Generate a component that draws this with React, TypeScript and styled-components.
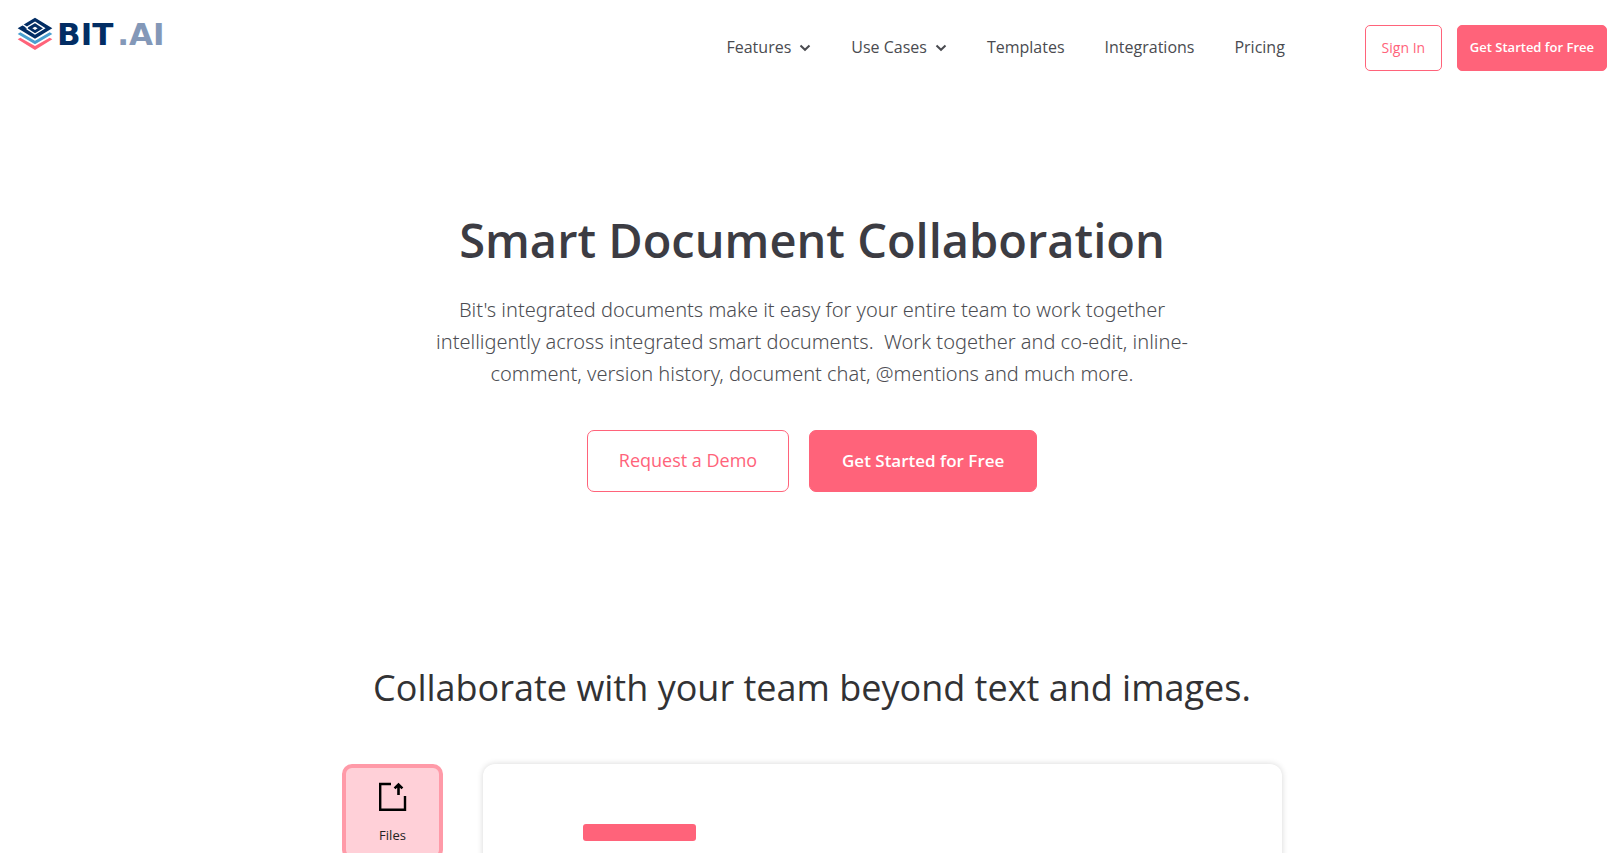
import React from 'react';
import styled, { createGlobalStyle } from 'styled-components';

const coral = '#ff637a';

const GlobalStyle = createGlobalStyle`
  *, *::before, *::after { box-sizing: border-box; }
  html { scrollbar-width: none; }
  body {
    margin: 0;
    background: #fff;
    color: #323234;
    font-family: 'Open Sans', 'Noto Sans', sans-serif;
  }
  h1, h2, p, ul { margin: 0; padding: 0; }
`;

const Header = styled.header`
  display: flex;
  align-items: flex-start;
  justify-content: space-between;
  padding: 0 17px;
`;

const LogoLink = styled.a`
  display: flex;
  align-items: center;
  gap: 4px;
  margin-top: 17px;
  text-decoration: none;
`;

const Wordmark = styled.span`
  display: flex;
  gap: 4px;
  font: 700 31px/32px 'DejaVu Sans', sans-serif;
  color: #022d64;
`;

const WordmarkSuffix = styled.span`
  color: #8398b8;
`;

const Menu = styled.nav`
  display: flex;
  align-items: center;
  gap: 80px;
  margin-top: 25px;
`;

const MenuList = styled.ul`
  display: flex;
  gap: 40px;
  padding-bottom: 2px;
  list-style: none;
`;

const MenuLink = styled.a`
  display: flex;
  align-items: center;
  gap: 8px;
  color: #4a4b50;
  font-size: 16px;
  line-height: 24px;
  text-decoration: none;
`;

const Actions = styled.div<{ $gap: number }>`
  display: flex;
  justify-content: center;
  gap: ${p => p.$gap}px;
`;

const Button = styled.button<{ $filled?: boolean; $large?: boolean }>`
  height: ${p => (p.$large ? 62 : 46)}px;
  padding: 0 ${p => (p.$large ? 31 : 12)}px 2px;
  min-width: ${p => (p.$large ? (p.$filled ? 228 : 202) : 77)}px;
  border: 1px solid ${coral};
  border-radius: ${p => (p.$large ? 7 : 5)}px;
  background: ${p => (p.$filled ? coral : '#fff')};
  color: ${p => (p.$filled ? '#fff' : coral)};
  font-family: inherit;
  font-size: ${p => (p.$large ? (p.$filled ? 17 : 18) : p.$filled ? 13 : 14)}px;
  font-weight: ${p => (p.$filled ? 600 : 400)};
  white-space: nowrap;
  cursor: pointer;
`;

const Hero = styled.section`
  display: flex;
  flex-direction: column;
  align-items: center;
  padding: 137px 24px 0;
  text-align: center;
`;

const Title = styled.h1`
  color: #3c3c43;
  font-size: 47px;
  font-weight: 600;
  line-height: 64px;
`;

const Lead = styled.p`
  max-width: 780px;
  margin: 22px 0 40px;
  color: #4c4d52;
  font-family: 'Noto Sans', 'Open Sans', sans-serif;
  font-size: 20px;
  font-weight: 300;
  line-height: 32px;
`;

const Showcase = styled.section`
  display: flex;
  flex-direction: column;
  align-items: center;
  padding: 172px 24px 80px;
`;

const Subtitle = styled.h2`
  font-size: 36px;
  font-weight: 400;
  line-height: 48px;
  text-align: center;
`;

const Demo = styled.div`
  display: flex;
  align-items: flex-start;
  gap: 40px;
  width: 100%;
  max-width: 940px;
  margin-top: 52px;
`;

const Tile = styled.button`
  display: flex;
  flex-direction: column;
  align-items: center;
  gap: 14px;
  width: 101px;
  padding: 14px 0 12px;
  border: 4px solid #ff9aa8;
  border-radius: 10px;
  background: #ffd0d8;
  color: #222;
  font-family: inherit;
  font-size: 13px;
  line-height: 18px;
  cursor: pointer;
`;

const Card = styled.div`
  flex: 1;
  min-height: 460px;
  padding: 60px 100px;
  border-radius: 12px;
  background: #fff;
  box-shadow: 0 0 6px rgba(0, 0, 0, 0.16);
`;

const Bar = styled.div`
  width: 113px;
  height: 17px;
  border-radius: 3px;
  background: ${coral};
`;

const LogoMark = () => (
  <svg width="36" height="34" viewBox="51 51 108 102" aria-hidden="true">
    <path d="M53 118 61 113 105 138 149 113 157 118 105 150Z" fill="#ff637a" />
    <path d="M53 102 61 97 105 122 149 97 157 102 105 133Z" fill="#4a9fd0" />
    <path d="M105 53 157 85 105 116 53 85 66 77 75 71Z" fill="#022d64" />
    <path d="M68 74 84 84 M77 84 105 67 133 85 105 102 80 86" fill="none" stroke="#fff" strokeWidth="4" />
    <path d="M105 80 113 85 105 90 97 85Z" fill="#fff" />
  </svg>
);

const Chevron = () => (
  <svg width="12" height="12" viewBox="0 0 12 12" aria-hidden="true">
    <path d="M1.5 4.5 6 8.8 10.5 4.5" fill="none" stroke="currentColor" strokeWidth="2" />
  </svg>
);

const FileIcon = () => (
  <svg width="30" height="30" viewBox="0 0 30 30" aria-hidden="true">
    <path d="M13 2H2.2V27.8H27V14" fill="none" stroke="#000" strokeWidth="2.4" />
    <path d="M20.5 13V3M16.6 6.4 20.5 2.6 24.4 6.4" fill="none" stroke="#000" strokeWidth="2.6" />
  </svg>
);

const menu = [
  { label: 'Features', open: true },
  { label: 'Use Cases', open: true },
  { label: 'Templates' },
  { label: 'Integrations' },
  { label: 'Pricing' },
];

export default function App() {
  return (
    <>
      <GlobalStyle />
      <Header>
        <LogoLink href="#">
          <LogoMark />
          <Wordmark>
            BIT<WordmarkSuffix>.AI</WordmarkSuffix>
          </Wordmark>
        </LogoLink>
        <Menu>
          <MenuList>
            {menu.map(item => (
              <li key={item.label}>
                <MenuLink href="#">
                  {item.label}
                  {item.open && <Chevron />}
                </MenuLink>
              </li>
            ))}
          </MenuList>
          <Actions $gap={15}>
            <Button>Sign In</Button>
            <Button $filled>Get Started for Free</Button>
          </Actions>
        </Menu>
      </Header>
      <main>
        <Hero>
          <Title>Smart Document Collaboration</Title>
          <Lead>
            Bit's integrated documents make it easy for your entire team to work together
            intelligently across integrated smart documents.&nbsp; Work together and co-edit,
            inline-comment, version history, document chat, @mentions and much more.
          </Lead>
          <Actions $gap={20}>
            <Button $large>Request a Demo</Button>
            <Button $large $filled>Get Started for Free</Button>
          </Actions>
        </Hero>
        <Showcase>
          <Subtitle>Collaborate with your team beyond text and images.</Subtitle>
          <Demo>
            <Tile>
              <FileIcon />
              Files
            </Tile>
            <Card>
              <Bar />
            </Card>
          </Demo>
        </Showcase>
      </main>
    </>
  );
}
